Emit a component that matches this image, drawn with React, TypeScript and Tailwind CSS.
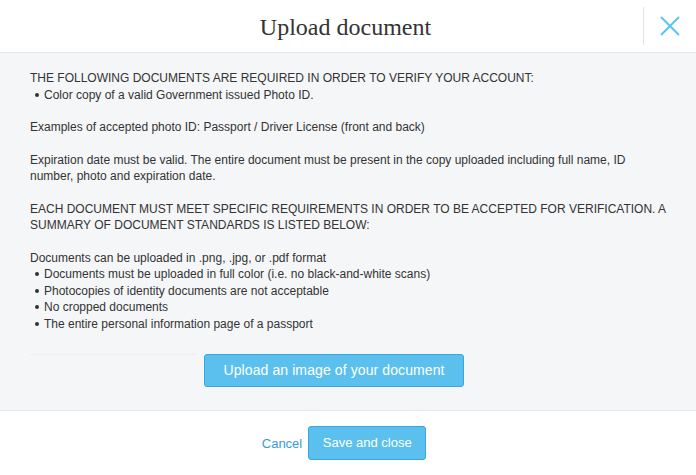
const requirements = [
  "Documents must be uploaded in full color (i.e. no black-and-white scans)",
  "Photocopies of identity documents are not acceptable",
  "No cropped documents",
  "The entire personal information page of a passport",
];

function CloseIcon() {
  return (
    <svg width="20" height="20" viewBox="0 0 20 20" fill="none" aria-hidden="true">
      <path d="M1 1L19 19M19 1L1 19" stroke="#5bc3ef" strokeWidth="2" />
    </svg>
  );
}

export default function App() {
  return (
    <div className="flex h-[475px] w-[696px] flex-col bg-white font-['Liberation_Sans',Arial,sans-serif]">
      <header className="flex h-[53px] shrink-0 items-center border-b border-[#e3e6ea] bg-white">
        <h1 className="flex-1 pl-[48px] pt-[1px] text-center font-['Liberation_Serif','Times_New_Roman',serif] text-[24px] text-[#333]">
          Upload document
        </h1>
        <div className="flex h-[38px] items-center border-l border-[#e1e3e6] pl-[16px] pr-[16px]">
          <button className="flex h-[20px] w-[20px] items-center justify-center">
            <CloseIcon />
          </button>
        </div>
      </header>

      <main className="flex h-[358px] shrink-0 flex-col border-b border-[#e3e6ea] bg-[#f5f6f8] px-[30px] pt-[17px] text-[12px] leading-[16.5px] text-[#333]">
        <div className="mb-[16px]">
          <p>THE FOLLOWING DOCUMENTS ARE REQUIRED IN ORDER TO VERIFY YOUR ACCOUNT:</p>
          <ul>
            <li className="flex items-center">
              <span className="ml-[5px] mr-[5px] h-[4px] w-[4px] rounded-full bg-[#333]" />
              Color copy of a valid Government issued Photo ID.
            </li>
          </ul>
        </div>
        <p className="mb-[16px]">Examples of accepted photo ID: Passport / Driver License (front and back)</p>
        <p className="mb-[16px]">
          Expiration date must be valid. The entire document must be present in the copy uploaded including full name, ID
          number, photo and expiration date.
        </p>
        <p className="mb-[16px]">
          EACH DOCUMENT MUST MEET SPECIFIC REQUIREMENTS IN ORDER TO BE ACCEPTED FOR VERIFICATION. A SUMMARY OF
          DOCUMENT STANDARDS IS LISTED BELOW:
        </p>
        <div>
          <p>Documents can be uploaded in .png, .jpg, or .pdf format</p>
          <ul>
            {requirements.map((item) => (
              <li key={item} className="flex items-center">
                <span className="ml-[5px] mr-[5px] h-[4px] w-[4px] rounded-full bg-[#333]" />
                {item}
              </li>
            ))}
          </ul>
        </div>

        <div className="mt-[22px] flex items-start">
          <div className="h-px w-[166px] bg-[#eceef1]" />
          <button className="ml-[8px] h-[33px] w-[260px] rounded-[3px] border border-[#3aa6dd] bg-[#5bc0ee] text-[14px] tracking-[0.1px] text-white">
            Upload an image of your document
          </button>
        </div>
      </main>

      <footer className="flex flex-1 items-start justify-center gap-[6px] bg-white pr-[8px] pt-[15px]">
        <button className="mt-[8px] text-[13px] text-[#3a9ad9]">Cancel</button>
        <button className="h-[34px] w-[118px] rounded-[3px] border border-[#3aa6dd] bg-[#5bc0ee] text-[13px] text-white">
          Save and close
        </button>
      </footer>
    </div>
  );
}
